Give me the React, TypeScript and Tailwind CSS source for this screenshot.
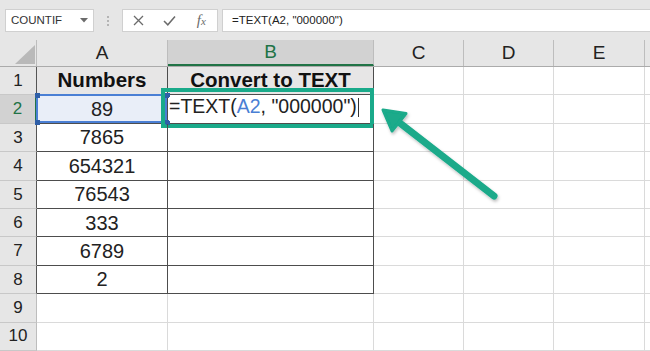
import React from "react";

const data: [string, string][] = [
  ["Numbers", "Convert to TEXT"],
  ["89", ""],
  ["7865", ""],
  ["654321", ""],
  ["76543", ""],
  ["333", ""],
  ["6789", ""],
  ["2", ""],
  ["", ""],
  ["", ""],
];

function Handle({ className }: { className: string }) {
  return <div className={`absolute w-[5px] h-[5px] bg-[#2f5fa8] ${className}`} />;
}

export default function App() {
  return (
    <div
      className="relative w-[650px] h-[351px] overflow-hidden bg-white text-[#222]"
      style={{ fontFamily: '"Liberation Sans", Arial, sans-serif' }}
    >
      {/* Formula bar area */}
      <div className="h-[40px] bg-[#e6e6e6] flex items-start pt-[9px]">
        <div className="ml-[5px] w-[89px] h-[23px] bg-white border border-[#d0d0d0] flex items-center justify-between pl-[5px] pr-[5px]">
          <span className="text-[11.5px] text-[#333]">COUNTIF</span>
          <svg width="8" height="5" viewBox="0 0 8 5">
            <path d="M0 0 L8 0 L4 4.5 Z" fill="#6b6b6b" />
          </svg>
        </div>
        <div className="w-[28px] h-[23px] flex flex-col items-center justify-center gap-[2px]">
          <div className="w-[2px] h-[2px] bg-[#b4b4b4]" />
          <div className="w-[2px] h-[2px] bg-[#b4b4b4]" />
          <div className="w-[2px] h-[2px] bg-[#b4b4b4]" />
        </div>
        <div className="w-[96px] h-[23px] bg-white border border-[#d0d0d0] flex items-center">
          <div className="w-[32px] flex justify-center">
            <svg width="11" height="11" viewBox="0 0 11 11">
              <path d="M1 1 L10 10 M10 1 L1 10" stroke="#6b6b6b" strokeWidth="1.3" fill="none" />
            </svg>
          </div>
          <div className="w-[32px] flex justify-center">
            <svg width="13" height="11" viewBox="0 0 13 11">
              <path d="M1 6 L4.8 9.8 L12 1.5" stroke="#6b6b6b" strokeWidth="1.5" fill="none" />
            </svg>
          </div>
          <div className="w-[32px] flex justify-center">
            <span
              className="text-[15px] italic text-[#6b6b6b] leading-none"
              style={{ fontFamily: '"Liberation Serif", "Times New Roman", serif' }}
            >
              f<span className="text-[11px]">x</span>
            </span>
          </div>
        </div>
        <div className="ml-[4px] flex-1 h-[23px] bg-white border border-[#d0d0d0] border-r-0 flex items-center pl-[9px]">
          <span className="text-[11.5px] text-[#222]">=TEXT(A2, "000000")</span>
        </div>
      </div>

      {/* Column headers */}
      <div className="flex h-[27px] bg-[#e6e6e6] border-b border-[#ababab]">
        <div className="relative w-[37px] border-r border-[#bdbdbd]">
          <svg className="absolute left-[15px] top-[5px]" width="20" height="19" viewBox="0 0 20 19">
            <path d="M20 0 L20 19 L0 19 Z" fill="#b9b9b9" />
          </svg>
        </div>
        <div className="w-[131px] border-r border-[#bdbdbd] flex items-center justify-center text-[19px] text-[#222]">A</div>
        <div className="w-[206px] border-r border-[#bdbdbd] bg-[#d2d2d2] border-b-2 border-b-[#217346] flex items-center justify-center text-[19px] text-[#217346]">B</div>
        <div className="w-[90px] border-r border-[#bdbdbd] flex items-center justify-center text-[19px] text-[#222]">C</div>
        <div className="w-[90px] border-r border-[#bdbdbd] flex items-center justify-center text-[19px] text-[#222]">D</div>
        <div className="w-[91px] border-r border-[#bdbdbd] flex items-center justify-center text-[19px] text-[#222]">E</div>
        <div className="flex-1" />
      </div>

      {/* Rows */}
      {data.map(([a, b], i) => {
        const r = i + 1;
        const inTable = r <= 8;
        const sel = r === 2;
        const head = r === 1;
        return (
          <div key={r} className="flex h-[28.4px]">
            <div
              className={`w-[37px] border-b border-[#c8c8c8] flex items-center justify-center text-[17px] ${
                sel
                  ? "bg-[#d2d2d2] text-[#217346] border-r-2 border-r-[#217346]"
                  : inTable
                  ? "bg-[#e6e6e6] text-[#222] border-r border-r-[#555555]"
                  : "bg-[#e6e6e6] text-[#222] border-r border-r-[#bdbdbd]"
              }`}
            >
              {r}
            </div>
            {/* A */}
            <div
              className={`relative w-[131px] flex items-center justify-center ${
                inTable ? "border-r border-b border-[#4d4d4d]" : "border-r border-b border-[#dadada]"
              } ${head ? "bg-[#e7e6e6] font-bold text-[20.5px] text-[#111]" : "text-[20px] text-[#222]"} ${
                sel ? "bg-[#e9eef8]" : ""
              }`}
            >
              {a}
              {sel && (
                <>
                  <div className="absolute -left-[1px] -top-[1px] right-0 bottom-0 border-2 border-[#4a7fd4]" />
                  <Handle className="-left-[2px] -top-[2px]" />
                  <Handle className="-left-[2px] -bottom-[2px]" />
                  <Handle className="-right-[2px] -top-[2px]" />
                  <Handle className="-right-[2px] -bottom-[2px]" />
                </>
              )}
            </div>
            {/* B */}
            <div
              className={`relative w-[206px] flex items-center ${
                head ? "justify-center bg-[#e7e6e6] font-bold text-[20.5px] text-[#111]" : "justify-start text-[20px]"
              } ${inTable ? "border-r border-b border-[#4d4d4d]" : "border-r border-b border-[#dadada]"}`}
            >
              {b}
              {sel && (
                <>
                  <div className="flex items-center pl-[1px] -mt-[4px] text-[19.5px] text-[#222]">
                    <span>=TEXT(</span>
                    <span className="text-[#4a7fd4]">A2</span>
                    <span>, "000000")</span>
                    <span className="ml-[1px] w-[1px] h-[19px] bg-[#333]" />
                  </div>
                  <div className="absolute -left-[7px] -top-[7px] -right-[1px] -bottom-[5px] border-4 border-[#1aaa8a]" />
                  <div className="absolute -left-[2px] -top-[2px] w-[4px] h-[4px] bg-[#2f5fa8]" />
                  <div className="absolute -left-[2px] -bottom-[2px] w-[4px] h-[4px] bg-[#2f5fa8]" />
                </>
              )}
            </div>
            <div className="w-[90px] border-r border-b border-[#dadada]" />
            <div className="w-[90px] border-r border-b border-[#dadada]" />
            <div className="w-[91px] border-r border-b border-[#dadada]" />
            <div className="flex-1 border-b border-[#dadada]" />
          </div>
        );
      })}

      {/* Annotation arrow */}
      <svg className="absolute inset-0 pointer-events-none" width="650" height="351" viewBox="0 0 650 351">
        <defs>
          <filter id="sh" x="-20%" y="-20%" width="140%" height="140%">
            <feDropShadow dx="1" dy="2" stdDeviation="1.5" floodColor="#000" floodOpacity="0.25" />
          </filter>
        </defs>
        <g filter="url(#sh)">
          <line x1="494" y1="196" x2="396" y2="120" stroke="#1aaa8a" strokeWidth="7" strokeLinecap="round" />
          <path
            d="M383 110 L406 113.5 L392 131 Z"
            fill="#1aaa8a"
            stroke="#1aaa8a"
            strokeWidth="3"
            strokeLinejoin="round"
          />
        </g>
      </svg>
    </div>
  );
}
